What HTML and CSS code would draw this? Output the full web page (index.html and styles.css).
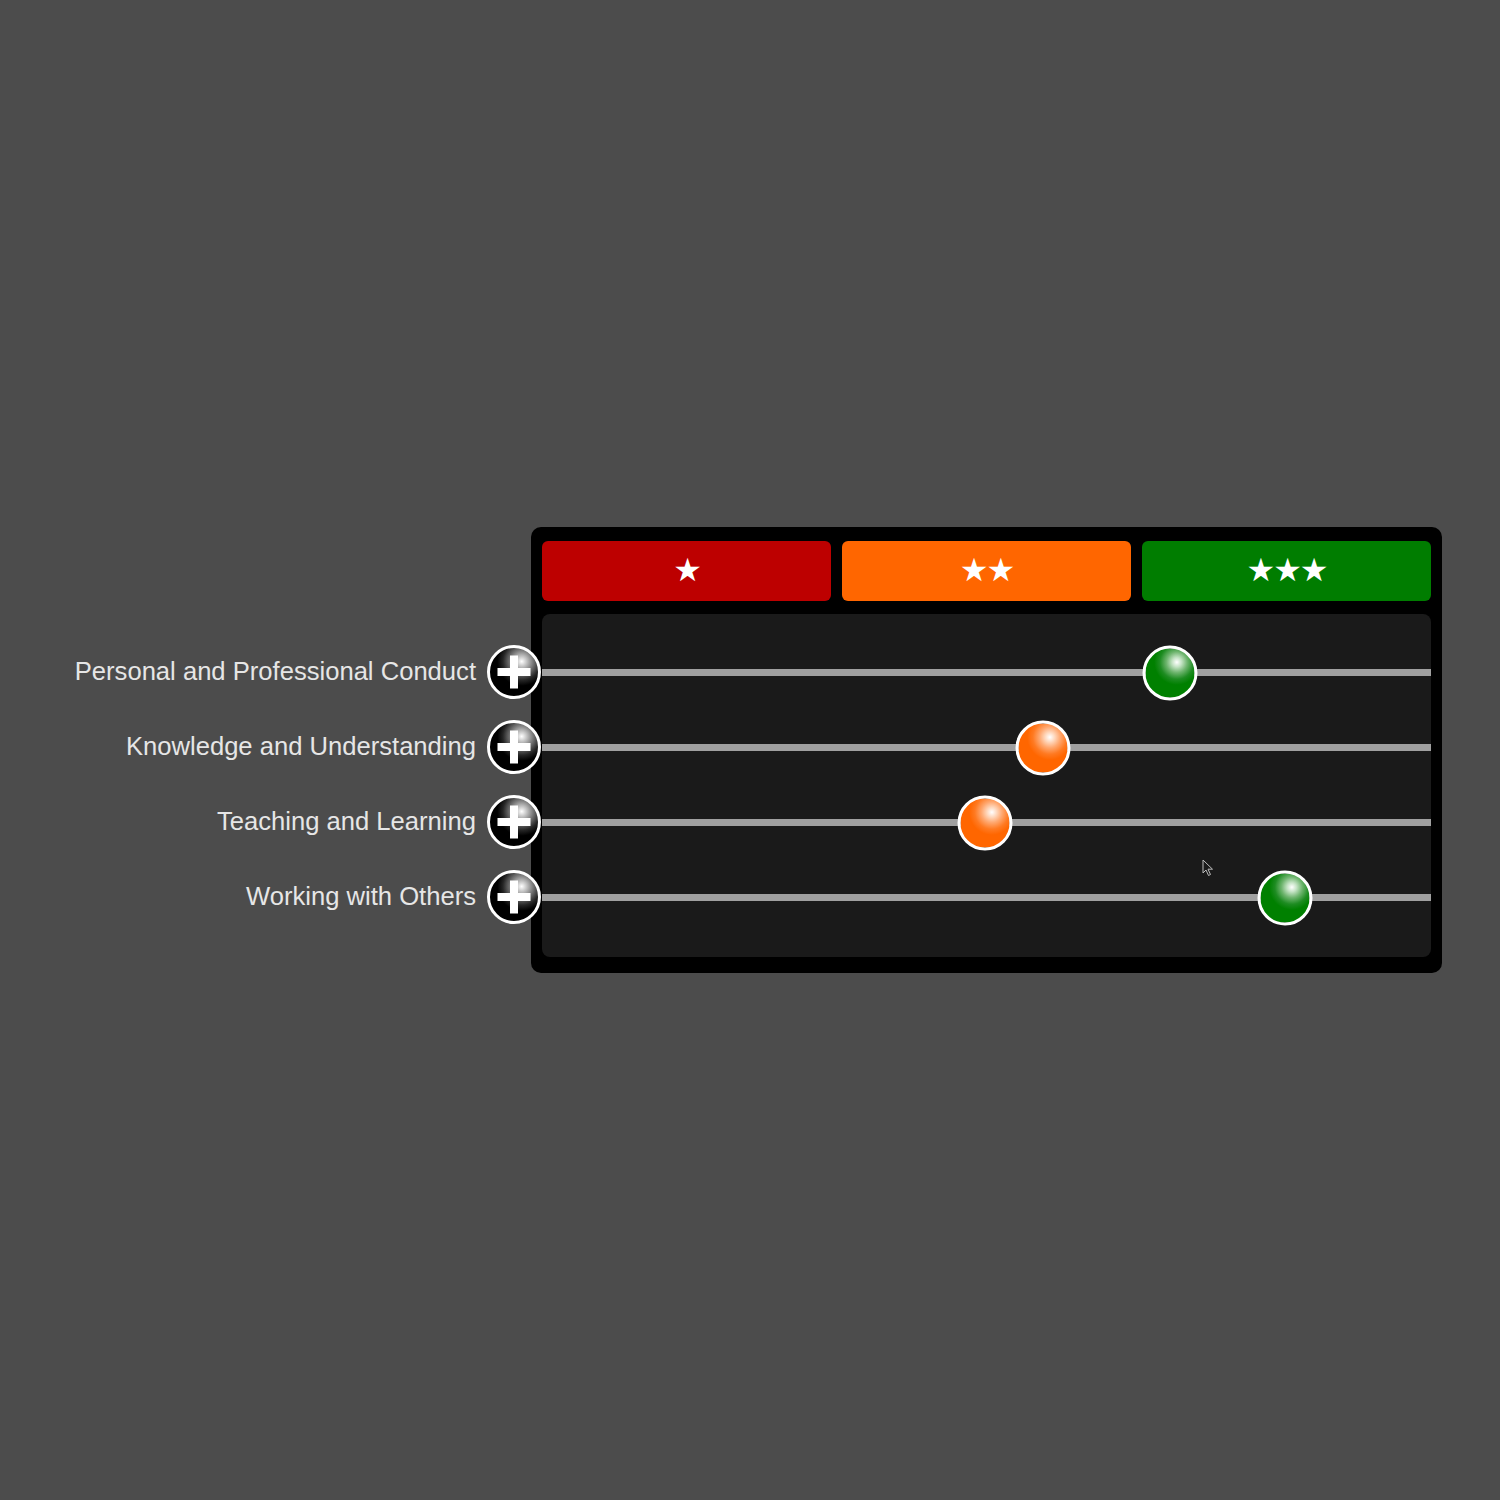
FILE: index.html
```html
<!DOCTYPE html>
<html lang="en">
<head>
    <meta charset="UTF-8">
    <title>Skills Rating</title>
    <link rel="stylesheet" href="styles.css">
</head>
<body>
    <div class="rating-widget">
        <!-- 左侧标签 -->
        <div class="labels">
            <div class="label-row">
                <span class="label-text">Personal and Professional Conduct</span>
                <span class="plus-btn"></span>
            </div>
            <div class="label-row">
                <span class="label-text">Knowledge and Understanding</span>
                <span class="plus-btn"></span>
            </div>
            <div class="label-row">
                <span class="label-text">Teaching and Learning</span>
                <span class="plus-btn"></span>
            </div>
            <div class="label-row">
                <span class="label-text">Working with Others</span>
                <span class="plus-btn"></span>
            </div>
        </div>

        <!-- 评分面板 -->
        <div class="panel">
            <div class="tabs">
                <div class="tab tab-red">★</div>
                <div class="tab tab-orange">★★</div>
                <div class="tab tab-green">★★★</div>
            </div>
            <div class="tracks">
                <div class="track-row">
                    <div class="track"></div>
                    <span class="knob knob-green" style="left: 70.6%"></span>
                </div>
                <div class="track-row">
                    <div class="track"></div>
                    <span class="knob knob-orange" style="left: 56.4%"></span>
                </div>
                <div class="track-row">
                    <div class="track"></div>
                    <span class="knob knob-orange" style="left: 49.8%"></span>
                </div>
                <div class="track-row">
                    <div class="track"></div>
                    <span class="knob knob-green" style="left: 83.6%"></span>
                </div>
                <!-- 鼠标指针 -->
                <svg class="cursor" width="12" height="18" viewBox="0 0 12 18">
                    <path d="M1 1 L1 14 L4 11 L6.5 16.5 L8.5 15.5 L6 10.2 L10.5 10.2 Z" fill="#1a1a1a" stroke="#bbb" stroke-width="1"/>
                </svg>
            </div>
        </div>
    </div>
</body>
</html>
```
FILE: styles.css
```css
* {
    margin: 0;
    padding: 0;
    box-sizing: border-box;
}

body {
    font-family: 'Liberation Sans', Arial, sans-serif;
    background-color: #4c4c4c;
    width: 1500px;
    height: 1500px;
}

.rating-widget {
    display: flex;
    align-items: flex-start;
    padding-top: 527px;
}

/* 左侧标签列 */
.labels {
    width: 531px;
    padding-top: 108px;
    display: flex;
    flex-direction: column;
}

.label-row {
    height: 75px;
    display: flex;
    align-items: center;
    justify-content: flex-end;
    margin-right: -10px;
}

.label-text {
    color: #e6e6e6;
    font-size: 25.6px;
    margin-right: 11px;
    margin-top: -3px;
}

.plus-btn {
    position: relative;
    z-index: 2;
    width: 54px;
    height: 54px;
    border-radius: 50%;
    border: 3px solid #fff;
    background: radial-gradient(circle at 66% 28%, #ffffff 0%, #c8c8c8 10%, #7a7a7a 24%, #262626 40%, #000 52%);
    margin-top: -1px;
}

.plus-btn::before,
.plus-btn::after {
    content: '';
    position: absolute;
    background: #fff;
    left: 50%;
    top: 50%;
    transform: translate(-50%, -50%);
}

.plus-btn::before {
    width: 33px;
    height: 8px;
}

.plus-btn::after {
    width: 8px;
    height: 33px;
}

/* 评分面板 */
.panel {
    width: 911px;
    background: #000;
    border-radius: 10px;
    padding: 14px 11px 16px;
}

.tabs {
    display: flex;
    gap: 11px;
    margin-bottom: 13px;
}

.tab {
    flex: 1;
    height: 60px;
    border-radius: 6px;
    display: flex;
    align-items: center;
    justify-content: center;
    color: #fff;
    font-family: 'DejaVu Sans', sans-serif;
    font-size: 32px;
    letter-spacing: -2px;
    line-height: 1;
    padding-bottom: 2px;
}

.tab-red {
    background-color: #bd0000;
}

.tab-orange {
    background-color: #ff6600;
}

.tab-green {
    background-color: #007d00;
}

.tracks {
    position: relative;
    background: #1a1a1a;
    border-radius: 8px;
    padding: 21px 0 22px;
}

.track-row {
    position: relative;
    height: 75px;
    display: flex;
    align-items: center;
}

.track {
    width: 100%;
    height: 7px;
    background: #a0a0a0;
}

/* 滑块 */
.knob {
    position: absolute;
    top: 50%;
    width: 55px;
    height: 55px;
    border-radius: 50%;
    border: 3px solid #fff;
    transform: translate(-50%, -50%);
}

.knob-green {
    background: radial-gradient(circle at 64% 28%, #ffffff 0%, #c4e3c4 10%, #6fb56f 22%, #1e8c22 36%, #008000 48%);
}

.knob-orange {
    background: radial-gradient(circle at 64% 28%, #ffffff 0%, #ffd9bf 10%, #ffa870 22%, #ff7a22 36%, #ff6600 48%);
}

.cursor {
    position: absolute;
    left: 660px;
    top: 245px;
}
```
